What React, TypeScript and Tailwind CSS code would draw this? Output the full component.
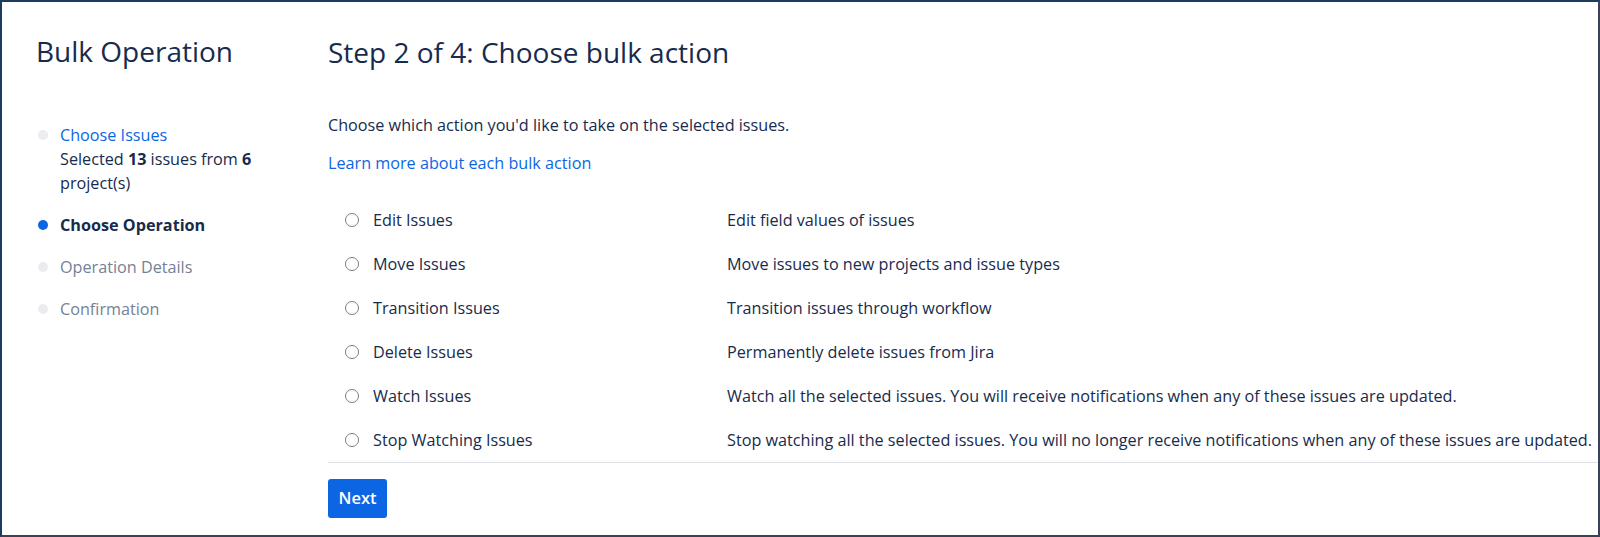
import React from "react";

const rows: [string, string][] = [
  ["Edit Issues", "Edit field values of issues"],
  ["Move Issues", "Move issues to new projects and issue types"],
  ["Transition Issues", "Transition issues through workflow"],
  ["Delete Issues", "Permanently delete issues from Jira"],
  ["Watch Issues", "Watch all the selected issues. You will receive notifications when any of these issues are updated."],
  ["Stop Watching Issues", "Stop watching all the selected issues. You will no longer receive notifications when any of these issues are updated."],
];

export default function App() {
  return (
    <div
      className="w-[1600px] h-[537px] bg-white border-2 border-t-[#1f3a5f] border-l-[#1f3a5f] border-r-[#3b4257] border-b-[#3b4257] flex text-[#172b4d] overflow-hidden"
      style={{ fontFamily: '"Open Sans", "Noto Sans", sans-serif' }}
    >
      {/* Sidebar */}
      <div className="w-[326px] shrink-0 pl-[34px] pt-[31px]">
        <h1 className="text-[28px] leading-[36px] font-medium text-[#172b4d]">Bulk Operation</h1>
        <ul className="mt-[54px] flex flex-col gap-[18px] text-[16.2px] leading-[24px]">
          <li className="flex">
            <span className="w-[10px] h-[10px] rounded-full bg-[#ebecf0] mt-[7px] ml-[2px] mr-[12px] shrink-0" />
            <div className="w-[240px]">
              <div className="text-[#0c66e4]">Choose Issues</div>
              <div>
                Selected <span className="font-bold">13</span> issues from <span className="font-bold">6</span> project(s)
              </div>
            </div>
          </li>
          <li className="flex">
            <span className="w-[10px] h-[10px] rounded-full bg-[#0c66e4] mt-[7px] ml-[2px] mr-[12px] shrink-0" />
            <div className="font-bold">Choose Operation</div>
          </li>
          <li className="flex">
            <span className="w-[10px] h-[10px] rounded-full bg-[#ebecf0] mt-[7px] ml-[2px] mr-[12px] shrink-0" />
            <div className="text-[#758195]">Operation Details</div>
          </li>
          <li className="flex">
            <span className="w-[10px] h-[10px] rounded-full bg-[#ebecf0] mt-[7px] ml-[2px] mr-[12px] shrink-0" />
            <div className="text-[#758195]">Confirmation</div>
          </li>
        </ul>
      </div>

      {/* Main */}
      <div className="flex-1 pt-[32px]">
        <h2 className="text-[28px] leading-[36px] font-medium text-[#172b4d]">Step 2 of 4: Choose bulk action</h2>
        <p className="mt-[45px] text-[16.2px] leading-[20px]">Choose which action you'd like to take on the selected issues.</p>
        <a className="block mt-[18px] text-[16.2px] leading-[20px] text-[#0c66e4]" href="#">
          Learn more about each bulk action
        </a>
        <div className="mt-[25px] border-b border-[#dfe1e6]">
          {rows.map(([label, desc]) => (
            <div key={label} className="flex items-center h-[44px] text-[16.2px] whitespace-nowrap">
              <div className="w-[399px] shrink-0 flex items-center pl-[17px]">
                <span className="w-[14px] h-[14px] rounded-full border-[1.5px] border-[#7a7f88] bg-white shrink-0" />
                <span className="ml-[14px]">{label}</span>
              </div>
              <div>{desc}</div>
            </div>
          ))}
        </div>
        <button className="mt-[16px] w-[59px] h-[39px] rounded-[3px] bg-[#0c66e4] text-white text-[16.5px] font-semibold">
          Next
        </button>
      </div>
    </div>
  );
}
